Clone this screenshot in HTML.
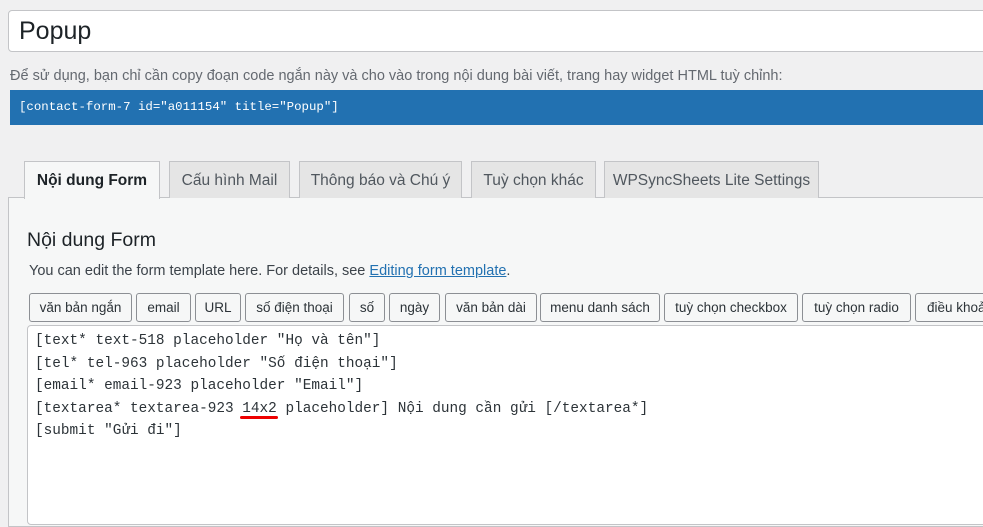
<!DOCTYPE html>
<html><head><meta charset="utf-8"><style>
body{margin:0;width:983px;height:509px;background:#f0f0f1;font-family:"Liberation Sans","Noto Sans CJK SC",sans-serif;overflow:hidden;position:relative;color:#3c434a}
.abs{position:absolute;white-space:nowrap}
.title{left:8px;top:10px;width:990px;height:42px;background:#fff;border:1px solid #c3c4c7;border-radius:4px;box-sizing:border-box}
.title span{position:absolute;left:10px;top:6px;font-size:25px;color:#1d2327}
.desc{left:10px;top:68px;font-size:14.5px;color:#646970}
.bar{left:10px;top:90px;width:980px;height:35px;background:#2271b1;color:#fff;font-family:"Liberation Mono",monospace;font-size:12.4px;line-height:35px;padding-left:9px;box-sizing:border-box}
.tab{top:161px;height:37px;background:#e5e5e5;border:1px solid #c3c4c7;border-bottom:none;box-sizing:border-box;font-size:15.5px;color:#50575e;line-height:37px;text-align:center}
.tab.act{background:#f6f7f7;color:#1d2327;font-weight:bold;height:38px;z-index:2}
.panel{left:8px;top:197px;width:990px;height:330px;background:#f6f7f7;border:1px solid #c3c4c7;box-sizing:border-box}
.h{left:27px;top:229px;font-size:19.5px;color:#1d2327}
.p{left:29px;top:263px;font-size:14.5px}
.p a{color:#2271b1;text-decoration:underline}
.btn{top:293px;height:29px;background:#f6f7f7;border:1px solid #8c8f94;border-radius:3px;box-sizing:border-box;font-size:13.5px;line-height:27px;text-align:center;color:#2c3338}
.ta{left:27px;top:325px;width:970px;height:200px;background:#fff;border:1px solid #c3c4c7;border-radius:4px;box-sizing:border-box}
.code{left:35px;top:330px;font-family:"Liberation Mono","DejaVu Sans Mono",monospace;font-size:14.4px;line-height:22.5px;color:#2c3338;white-space:pre}
.ul{left:240px;top:416px;width:38px;height:3px;background:#e00;border-radius:2px}
</style></head><body>
<div class="abs title"><span>Popup</span></div>
<div class="abs desc">Để sử dụng, bạn chỉ cần copy đoạn code ngắn này và cho vào trong nội dung bài viết, trang hay widget HTML tuỳ chỉnh:</div>
<div class="abs bar">[contact-form-7 id="a011154" title="Popup"]</div>
<div class="abs panel"></div>
<div class="abs tab act" style="left:24px;width:136px">Nội dung Form</div>
<div class="abs tab" style="left:169px;width:121px">Cấu hình Mail</div>
<div class="abs tab" style="left:299px;width:163px">Thông báo và Chú ý</div>
<div class="abs tab" style="left:471px;width:125px">Tuỳ chọn khác</div>
<div class="abs tab" style="left:604px;width:215px">WPSyncSheets Lite Settings</div>
<div class="abs h">Nội dung Form</div>
<div class="abs p">You can edit the form template here. For details, see <a>Editing form template</a>.</div>
<div class="abs btn" style="left:29px;width:103px">văn bản ngắn</div>
<div class="abs btn" style="left:136px;width:55px">email</div>
<div class="abs btn" style="left:195px;width:46px">URL</div>
<div class="abs btn" style="left:245px;width:99px">số điện thoại</div>
<div class="abs btn" style="left:349px;width:36px">số</div>
<div class="abs btn" style="left:389px;width:51px">ngày</div>
<div class="abs btn" style="left:445px;width:92px">văn bản dài</div>
<div class="abs btn" style="left:540px;width:120px">menu danh sách</div>
<div class="abs btn" style="left:664px;width:134px">tuỳ chọn checkbox</div>
<div class="abs btn" style="left:802px;width:109px">tuỳ chọn radio</div>
<div class="abs btn" style="left:915px;width:90px;text-align:left;padding-left:11px">điều khoản</div>
<div class="abs ta"></div>
<div class="abs code">[text* text-518 placeholder "Họ và tên"]
[tel* tel-963 placeholder "Số điện thoại"]
[email* email-923 placeholder "Email"]
[textarea* textarea-923 14x2 placeholder] Nội dung cần gửi [/textarea*]
[submit "Gửi đi"]</div>
<div class="abs ul"></div>
</body></html>
